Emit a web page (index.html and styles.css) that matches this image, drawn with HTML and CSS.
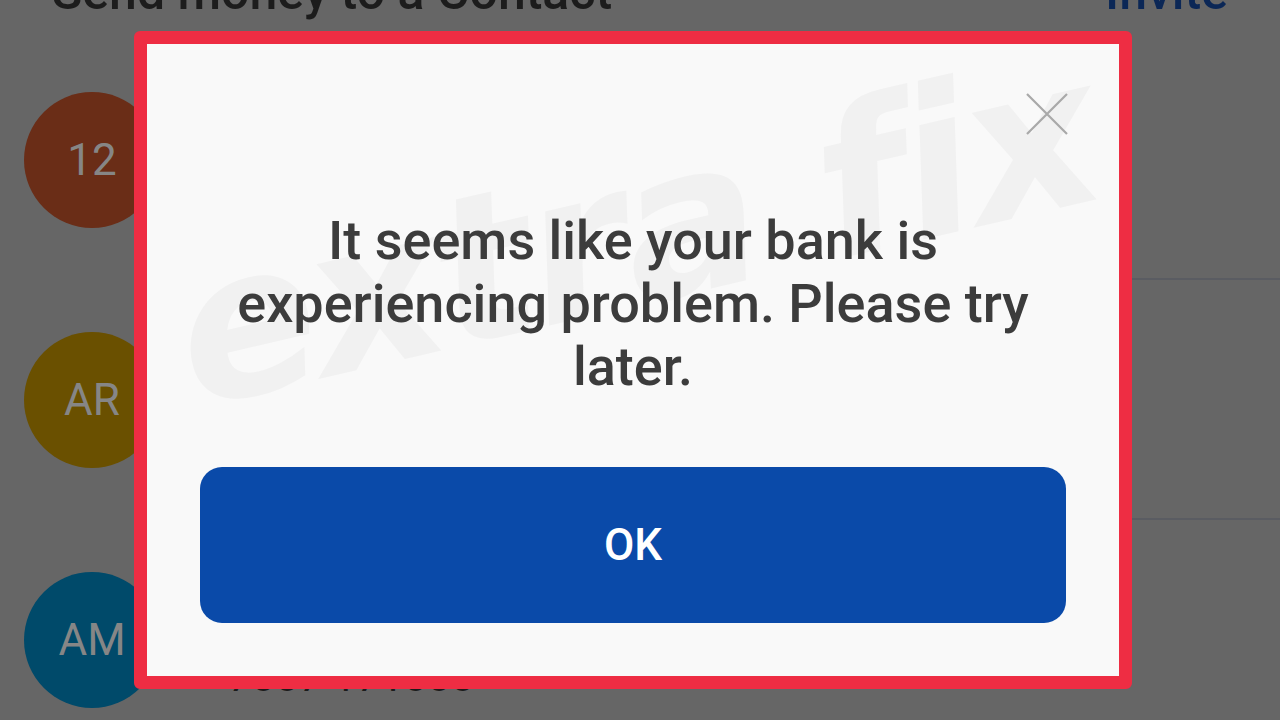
FILE: index.html
```html
<!DOCTYPE html>
<html lang="en">
  <head>
    <title>Send money</title>
    <link rel="stylesheet" href="styles.css">
  </head>

  <body>
    <div class="screen">
      <div class="topbar">
        <h1>Send money to a Contact</h1>
        <span class="invite">Invite</span>
      </div>

      <ul class="contacts">
        <li class="contact">
          <span class="avatar red">12</span>
        </li>
        <li class="contact">
          <span class="avatar yellow">AR</span>
        </li>
        <li class="contact">
          <span class="avatar blue">AM</span>
          <span class="phone">7007 171000</span>
        </li>
      </ul>

      <div class="dialog">
        <div class="watermark">extra fix</div>
        <button class="close" aria-label="Close">
          <svg width="44" height="44" viewBox="0 0 44 44">
            <path d="M2 2 L42 42 M42 2 L2 42" stroke="#a9a9a9" stroke-width="2.2" fill="none" />
          </svg>
        </button>
        <p class="message">It seems like your bank is experiencing problem. Please try later.</p>
        <button class="ok">OK</button>
      </div>
    </div>
  </body>
</html>
```

FILE: styles.css
```css
html, body {
  margin: 0;
  padding: 0;
}
body {
  background-color: #666666;
  font-family: Roboto, "Noto Sans", sans-serif;
  overflow: hidden;
}
.screen {
  position: relative;
  width: 1280px;
  height: 720px;
  overflow: hidden;
}
.topbar {
  display: flex;
  justify-content: space-between;
  align-items: flex-end;
  height: 8px;
  padding: 0 52px 0 52px;
}
.topbar h1 {
  margin: 0 0 -9px;
  font-size: 50px;
  font-weight: 500;
  color: #1c1c1c;
  line-height: 1;
}
.invite {
  margin-bottom: -9px;
  font-size: 50px;
  font-weight: 500;
  color: #0b2756;
  line-height: 1;
}
.contacts {
  list-style: none;
  margin: 0;
  padding: 0;
  padding-top: 32px;
}
.contact {
  display: flex;
  align-items: center;
  height: 240px;
  padding-left: 24px;
  position: relative;
}
.contact::after {
  content: "";
  position: absolute;
  left: 228px;
  right: 0;
  bottom: 0;
  height: 2px;
  background-color: #5a5c62;
}
.avatar {
  display: flex;
  align-items: center;
  justify-content: center;
  width: 136px;
  height: 136px;
  border-radius: 50%;
  font-size: 44px;
  color: #868686;
}
.avatar.red {
  background-color: #6a2d17;
}
.avatar.yellow {
  background-color: #6a5000;
}
.avatar.blue {
  background-color: #004a6a;
}
.phone {
  position: absolute;
  left: 228px;
  top: 132px;
  font-size: 42px;
  color: #1c1c1c;
}

/* dialog over the list */
.dialog {
  position: absolute;
  left: 134px;
  top: 31px;
  width: 972px;
  height: 632px;
  border: 13px solid #ee2d43;
  border-radius: 6px;
  background-color: #f9f9f9;
  display: flex;
  flex-direction: column;
  align-items: center;
  overflow: hidden;
}
.watermark {
  position: absolute;
  left: 20px;
  top: 70px;
  font-family: "DejaVu Sans", sans-serif;
  font-weight: bold;
  font-style: italic;
  font-size: 205px;
  color: #f1f1f1;
  transform: rotate(-13deg);
  white-space: nowrap;
  letter-spacing: -4px;
}
.close {
  position: absolute;
  right: 50px;
  top: 48px;
  background: none;
  border: none;
  padding: 0;
  cursor: pointer;
}
.message {
  position: relative;
  margin: 165px 0 0;
  width: 840px;
  text-align: center;
  font-size: 54px;
  font-weight: 500;
  line-height: 63px;
  color: #3c3c3c;
}
.ok {
  position: relative;
  margin-top: 69px;
  width: 866px;
  height: 156px;
  background-color: #0a4aa9;
  color: #ffffff;
  border: none;
  border-radius: 22px;
  font-family: Roboto, sans-serif;
  font-size: 44px;
  font-weight: 500;
  cursor: pointer;
}
```
